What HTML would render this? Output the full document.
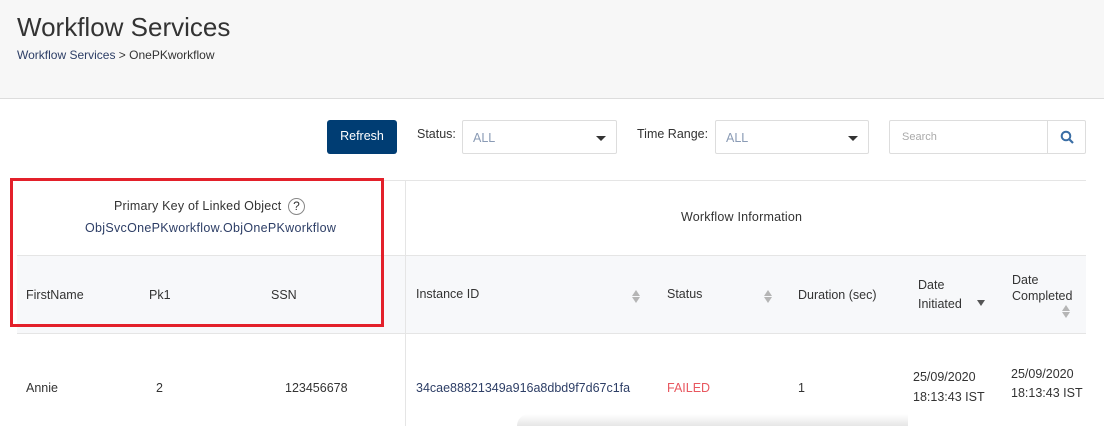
<!DOCTYPE html>
<html><head><style>
*{margin:0;padding:0;box-sizing:border-box}
body{width:1104px;height:426px;overflow:hidden;background:#fff;font-family:"Liberation Sans",sans-serif;color:#333;position:relative}
.a{position:absolute;white-space:nowrap}
.t{font-size:12.5px;color:#333}
.sel{position:absolute;border:1px solid #ddd;border-radius:2px;height:34px;background:#fff}
.sel span{position:absolute;left:10px;top:10px;font-size:12.5px;color:#8a9bb5}
.car{position:absolute;width:0;height:0;border-left:5px solid transparent;border-right:5px solid transparent;border-top:5px solid #333;top:15px}
.sort{position:absolute;width:8px;height:14px}
.sort:before{content:"";position:absolute;left:0;top:0;border-left:4px solid transparent;border-right:4px solid transparent;border-bottom:6px solid #b5b5b5}
.sort:after{content:"";position:absolute;left:0;top:7px;border-left:4px solid transparent;border-right:4px solid transparent;border-top:6px solid #b5b5b5}
</style></head><body>
<div class="a" style="left:0;top:0;width:1104px;height:99px;background:#f7f7f7;border-bottom:1px solid #ddd"></div>
<div class="a" style="left:17px;top:12px;font-size:26px;color:#333">Workflow Services</div>
<div class="a" style="left:17px;top:48px;font-size:12px;color:#333"><span style="color:#2d3e66">Workflow Services</span> &gt; OnePKworkflow</div>

<div class="a" style="left:327px;top:120px;width:70px;height:34px;background:#003d73;border-radius:3px;color:#fff;font-size:12.5px;text-align:center;line-height:33px">Refresh</div>
<div class="a t" style="left:417px;top:127px">Status:</div>
<div class="sel" style="left:462px;top:120px;width:155px"><span>ALL</span><div class="car" style="left:133px"></div></div>
<div class="a t" style="left:637px;top:127px">Time Range:</div>
<div class="sel" style="left:715px;top:120px;width:154px"><span>ALL</span><div class="car" style="left:132px"></div></div>
<div class="sel" style="left:889px;top:120px;width:197px"><span style="font-size:11px;color:#aaa;left:12px">Search</span>
<div style="position:absolute;left:157px;top:0;width:1px;height:32px;background:#ddd"></div>
<svg style="position:absolute;left:170px;top:9px" width="14" height="14" viewBox="0 0 14 14"><circle cx="6" cy="6" r="4.3" fill="none" stroke="#3a6ea5" stroke-width="2"/><path d="M9 9l4 4" stroke="#3a6ea5" stroke-width="2.2"/></svg></div>

<div class="a" style="left:17px;top:180px;width:1069px;height:1px;background:#e5e5e5"></div>
<div class="a" style="left:17px;top:255px;width:1069px;height:79px;background:#f7f8fa;border-top:1px solid #e5e5e5;border-bottom:1px solid #e5e5e5"></div>
<div class="a" style="left:405px;top:180px;width:1px;height:246px;background:#e5e5e5"></div>

<div class="a t" style="left:114px;top:199px;letter-spacing:0.2px">Primary Key of Linked Object</div>
<div class="a" style="left:288px;top:198px;width:17px;height:17px;border:1.5px solid #888;border-radius:50%;font-size:12px;text-align:center;line-height:14px;color:#333">?</div>
<div class="a t" style="left:85px;top:221px;color:#2d3e66;letter-spacing:0.3px">ObjSvcOnePKworkflow.ObjOnePKworkflow</div>
<div class="a t" style="left:681px;top:210px;letter-spacing:0.2px">Workflow Information</div>

<div class="a t" style="left:26px;top:288px">FirstName</div>
<div class="a t" style="left:149px;top:288px">Pk1</div>
<div class="a t" style="left:271px;top:288px">SSN</div>
<div class="a t" style="left:416px;top:287px">Instance ID</div>
<div class="sort" style="left:632px;top:290px"></div>
<div class="a t" style="left:667px;top:287px">Status</div>
<div class="sort" style="left:764px;top:290px"></div>
<div class="a t" style="left:798px;top:288px">Duration (sec)</div>
<div class="a t" style="left:918px;top:276px;line-height:19px">Date<br>Initiated</div>
<div class="a" style="left:977px;top:300px;border-left:4px solid transparent;border-right:4px solid transparent;border-top:6px solid #555"></div>
<div class="a t" style="left:1012px;top:272px;line-height:16px">Date<br>Completed</div>
<div class="sort" style="left:1062px;top:305px"></div>

<div class="a" style="left:10px;top:178px;width:374px;height:149px;border:3px solid #e3202a"></div>

<div class="a t" style="left:26px;top:381px">Annie</div>
<div class="a t" style="left:156px;top:381px">2</div>
<div class="a t" style="left:285px;top:381px">123456678</div>
<div class="a t" style="left:416px;top:381px;color:#2d3e66">34cae88821349a916a8dbd9f7d67c1fa</div>
<div class="a t" style="left:667px;top:381px;color:#e8575f">FAILED</div>
<div class="a t" style="left:798px;top:381px">1</div>
<div class="a t" style="left:913px;top:367px;line-height:20px">25/09/2020<br>18:13:43 IST</div>
<div class="a t" style="left:1011px;top:365px;line-height:19px">25/09/2020<br>18:13:43 IST</div>
<div class="a" style="left:517px;top:414px;width:391px;height:12px;background:linear-gradient(#fff,#e6e6e6);border-radius:12px 0 0 0"></div>
</body></html>
